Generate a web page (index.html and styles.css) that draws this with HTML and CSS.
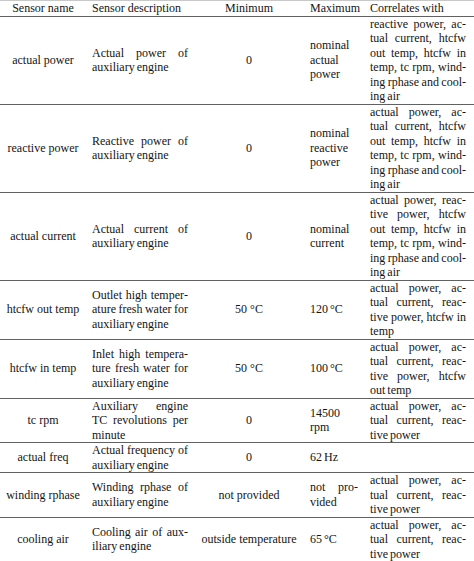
FILE: index.html
```html
<!DOCTYPE html>
<html lang="en">
<head>
<meta charset="utf-8">
<title>Sensors</title>
<link rel="stylesheet" href="styles.css">
</head>
<body>
<table class="sensors">
  <colgroup>
    <col class="c-name">
    <col class="c-desc">
    <col class="c-min">
    <col class="c-max">
    <col class="c-corr">
  </colgroup>
  <thead>
    <tr>
      <th class="name">Sensor name</th>
      <th class="desc">Sensor description</th>
      <th class="min">Minimum</th>
      <th class="max">Maximum</th>
      <th class="corr">Correlates with</th>
    </tr>
  </thead>
  <tbody>
    <tr>
      <td class="name">actual power</td>
      <td class="desc">Actual power of auxiliary engine</td>
      <td class="min">0</td>
      <td class="max">nominal actual power</td>
      <td class="corr"><span class="ln">reactive power, ac-</span><span class="ln">tual current, htcfw</span><span class="ln">out temp, htcfw in</span><span class="ln">temp, tc rpm, wind-</span><span class="ln">ing rphase and cool-</span><span class="ln">ing air</span></td>
    </tr>
    <tr>
      <td class="name">reactive power</td>
      <td class="desc">Reactive power of auxiliary engine</td>
      <td class="min">0</td>
      <td class="max">nominal reactive power</td>
      <td class="corr"><span class="ln">actual power, ac-</span><span class="ln">tual current, htcfw</span><span class="ln">out temp, htcfw in</span><span class="ln">temp, tc rpm, wind-</span><span class="ln">ing rphase and cool-</span><span class="ln">ing air</span></td>
    </tr>
    <tr>
      <td class="name">actual current</td>
      <td class="desc">Actual current of auxiliary engine</td>
      <td class="min">0</td>
      <td class="max">nominal current</td>
      <td class="corr"><span class="ln">actual power, reac-</span><span class="ln">tive power, htcfw</span><span class="ln">out temp, htcfw in</span><span class="ln">temp, tc rpm, wind-</span><span class="ln">ing rphase and cool-</span><span class="ln">ing air</span></td>
    </tr>
    <tr>
      <td class="name">htcfw out temp</td>
      <td class="desc">Outlet high temper&shy;ature fresh water for auxiliary engine</td>
      <td class="min">50&nbsp;°C</td>
      <td class="max">120&nbsp;°C</td>
      <td class="corr"><span class="ln">actual power, ac-</span><span class="ln">tual current, reac-</span><span class="ln">tive power, htcfw in</span><span class="ln">temp</span></td>
    </tr>
    <tr>
      <td class="name">htcfw in temp</td>
      <td class="desc">Inlet high tempera&shy;ture fresh water for auxiliary engine</td>
      <td class="min">50&nbsp;°C</td>
      <td class="max">100&nbsp;°C</td>
      <td class="corr"><span class="ln">actual power, ac-</span><span class="ln">tual current, reac-</span><span class="ln">tive power, htcfw</span><span class="ln">out temp</span></td>
    </tr>
    <tr>
      <td class="name">tc rpm</td>
      <td class="desc">Auxiliary engine TC revolutions per minute</td>
      <td class="min">0</td>
      <td class="max">14500 rpm</td>
      <td class="corr"><span class="ln">actual power, ac-</span><span class="ln">tual current, reac-</span><span class="ln">tive power</span></td>
    </tr>
    <tr>
      <td class="name">actual freq</td>
      <td class="desc">Actual frequency of auxiliary engine</td>
      <td class="min">0</td>
      <td class="max">62&nbsp;Hz</td>
      <td class="corr"></td>
    </tr>
    <tr>
      <td class="name">winding rphase</td>
      <td class="desc">Winding rphase of auxiliary engine</td>
      <td class="min">not provided</td>
      <td class="max">not pro&shy;vided</td>
      <td class="corr"><span class="ln">actual power, ac-</span><span class="ln">tual current, reac-</span><span class="ln">tive power</span></td>
    </tr>
    <tr>
      <td class="name">cooling air</td>
      <td class="desc">Cooling air of aux&shy;iliary engine</td>
      <td class="min">outside temperature</td>
      <td class="max">65&nbsp;°C</td>
      <td class="corr"><span class="ln">actual power, ac-</span><span class="ln">tual current, reac-</span><span class="ln">tive power</span></td>
    </tr>
  </tbody>
</table>
</body>
</html>
```

FILE: styles.css
```css
html, body {
  margin: 0;
  padding: 0;
  background: #ffffff;
}

.sensors {
  width: 474px;
  table-layout: fixed;
  border-collapse: collapse;
  font-family: "Liberation Serif", "Times New Roman", serif;
  font-size: 12px;
  line-height: 14.5px;
  color: #141414;
  border-top: 1px solid #c8c8c8;
}

.c-name { width: 86px; }
.c-desc { width: 108px; }
.c-min  { width: 110px; }
.c-max  { width: 60px; }
.c-corr { width: 110px; }

.sensors th,
.sensors td {
  padding: 0 6px;
  vertical-align: middle;
  border-bottom: 1px solid #616161;
  font-weight: normal;
}

.sensors th {
  white-space: nowrap;
  text-align: left;
}

.sensors .name,
.sensors .min {
  text-align: center;
  white-space: nowrap;
}

.sensors td.desc,
.sensors td.max,
.sensors td.corr {
  text-align: justify;
  word-spacing: -1px;
}

.sensors .corr {
  padding-right: 8px;
}

.ln {
  display: block;
  text-align: justify;
  text-align-last: justify;
}

.ln:last-child {
  text-align-last: left;
}
```
